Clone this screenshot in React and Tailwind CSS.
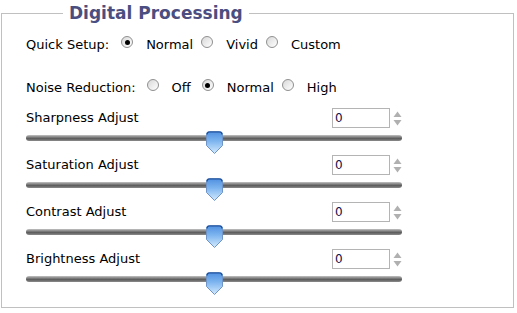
import React from "react";

const font = { fontFamily: '"DejaVu Sans", Verdana, sans-serif' };

function Radio({ checked }) {
  return (
    <span className="relative inline-flex w-[12px] h-[12px] rounded-full border border-[#8f8f8f] bg-[linear-gradient(135deg,#d8d8d8,#ffffff)] items-center justify-center shrink-0 -translate-y-[3px]">
      {checked && <span className="w-[5px] h-[5px] rounded-full bg-black" />}
    </span>
  );
}

function RadioRow({ label, gaps, options, selected }) {
  return (
    <div className="flex items-center h-[20px] text-[13px] text-black">
      <span>{label}</span>
      {options.map((o, i) => (
        <div key={o} className="flex items-center" style={{ marginLeft: gaps[i] }}>
          <Radio checked={o === selected} />
          <span className="ml-[13px]">{o}</span>
        </div>
      ))}
    </div>
  );
}

function Thumb() {
  return (
    <svg width="19" height="25" viewBox="0 0 19 25" className="absolute top-0 left-[179px]">
      <defs>
        <linearGradient id="tg" x1="0" y1="0" x2="0" y2="1">
          <stop offset="0" stopColor="#4f8fe0" />
          <stop offset="0.45" stopColor="#7fb6f0" />
          <stop offset="1" stopColor="#d4eafc" />
        </linearGradient>
      </defs>
      <path d="M1.5 4.5 Q1.5 1.5 4.5 1.5 H14.5 Q17.5 1.5 17.5 4.5 V15.5 L9.5 23.5 L1.5 15.5 Z" fill="url(#tg)" stroke="#6f95c8" strokeWidth="1" />
      <path d="M2 4.5 Q2 2 4.5 2 H14.5 Q17 2 17 4.5" fill="none" stroke="#1f4f9a" strokeWidth="1.2" />
    </svg>
  );
}

function SliderBlock({ label, first }) {
  return (
    <div className={first ? "" : "mt-[1px]"}>
      <div className="flex items-center justify-between w-[376px] h-[20px]">
        <span className="text-[13px] text-black">{label}</span>
        <div className="flex items-center">
          <div className="w-[58px] h-[20px] border border-[#b4b4b4] bg-white text-[12px] leading-[18px] pl-[2px] text-[#10104a]">0</div>
          <div className="flex flex-col ml-[3px] gap-[1px]">
            <svg width="9" height="7" viewBox="0 0 9 7"><path d="M4.5 0.5 L8.5 6 H0.5 Z" fill="#b0b0b0" /></svg>
            <svg width="9" height="7" viewBox="0 0 9 7"><path d="M0.5 1 H8.5 L4.5 6.5 Z" fill="#b0b0b0" /></svg>
          </div>
        </div>
      </div>
      <div className="relative w-[376px] h-[24px] mt-[2px] pt-[5px]">
        <div className="h-[6px] w-[376px] rounded-[3px] bg-[linear-gradient(to_bottom,#c4c4c4,#8a8a8a_30%,#5c5c5c_60%,#8c8c8c)]" />
        <Thumb />
      </div>
    </div>
  );
}

export default function App() {
  return (
    <div className="bg-white w-[517px] h-[313px]" style={font}>
      <fieldset className="ml-[1px] mt-[3px] w-[513px] h-[305px] border border-[#c0c0c0] pl-[24px]">
        <legend className="ml-[37px] px-[6px] text-[17px] leading-[20px] font-bold text-[#4a4e80]">Digital Processing</legend>
        <div className="mt-[12px]">
          <RadioRow label="Quick Setup:" gaps={[12, 8, 8]} options={["Normal", "Vivid", "Custom"]} selected="Normal" />
        </div>
        <div className="mt-[23px]">
          <RadioRow label="Noise Reduction:" gaps={[11, 11, 8]} options={["Off", "Normal", "High"]} selected="Normal" />
        </div>
        <div className="mt-[10px]">
          <SliderBlock label="Sharpness Adjust" first />
          <SliderBlock label="Saturation Adjust" />
          <SliderBlock label="Contrast Adjust" />
          <SliderBlock label="Brightness Adjust" />
        </div>
      </fieldset>
    </div>
  );
}
